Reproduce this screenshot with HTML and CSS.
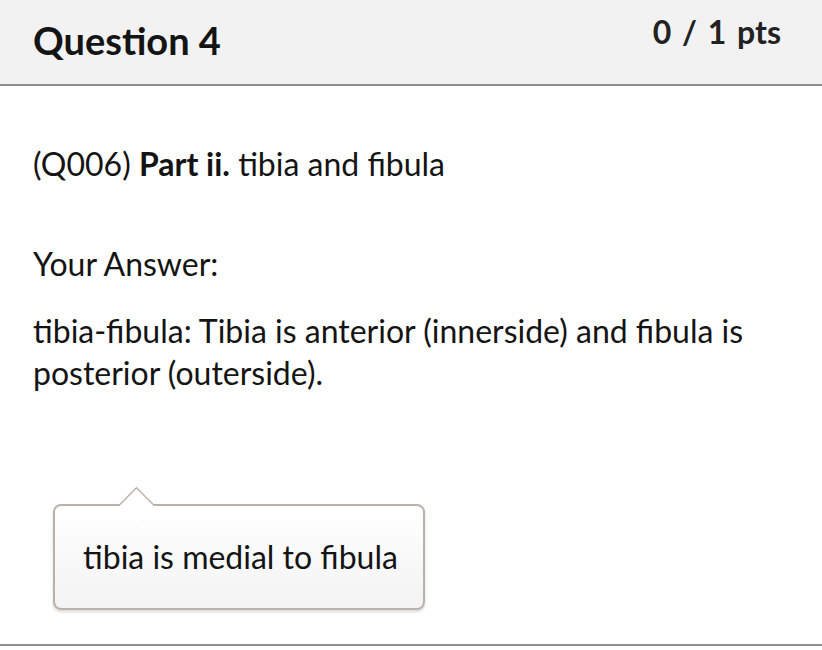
FILE: index.html
```html
<!DOCTYPE html>
<html lang="en">
<head>
    <meta charset="UTF-8" />
    <meta name="viewport" content="width=device-width, initial-scale=1" />
    <title>Question 4</title>
    <link rel="stylesheet" href="styles.css">
</head>
<body>
    <div class="question">
        <div class="question-header">
            <h2 class="question-title">Question 4</h2>
            <div class="question-points">0 / 1 pts</div>
        </div>
        <div class="question-body">
            <p class="question-text">(Q006) <strong>Part ii.</strong> tibia and fibula</p>
            <p class="answer-label">Your Answer:</p>
            <p class="answer-text">tibia-fibula: Tibia is anterior (innerside) and fibula is posterior (outerside).</p>
            <div class="comment">tibia is medial to fibula</div>
        </div>
        <div class="question-footer"></div>
    </div>
</body>
</html>
```

FILE: styles.css
```css
body {
    margin: 0;
    font-family: Lato, "Liberation Sans", sans-serif;
    color: #141414;
    background: #fff;
}

.question-header {
    display: flex;
    justify-content: space-between;
    align-items: flex-start;
    height: 84px;
    padding: 0 41px 0 33px;
    background-color: #f2f2f2;
    border-bottom: 2px solid #8e8e8e;
}

.question-title {
    margin: 21px 0 0;
    font-size: 38px;
    line-height: 1;
    font-weight: bold;
}

.question-points {
    margin-top: 16px;
    font-size: 32px;
    line-height: 1;
    font-weight: bold;
    word-spacing: 3px;
    color: #222;
}

.question-body {
    padding: 57px 40px 34px 33px;
    font-size: 32px;
    line-height: 42px;
}

.question-body p {
    margin: 0;
}

.question-text {
    margin-bottom: 58px !important;
}

.question-text strong {
    font-weight: bold;
}

.answer-label {
    margin-bottom: 25px !important;
}

.answer-text {
    max-width: 740px;
}

/* comment bubble */
.comment {
    position: relative;
    box-sizing: border-box;
    width: 372px;
    height: 106px;
    margin: 110px 0 0 20px;
    padding: 0 0 0 28px;
    display: flex;
    align-items: center;
    font-size: 32px;
    border: 2px solid #b8b2ab;
    border-radius: 8px;
    background: linear-gradient(#fff, #f3f3f3);
    box-shadow: 0 2px 3px rgba(0, 0, 0, 0.15);
}

.comment::before,
.comment::after {
    content: "";
    position: absolute;
    left: 69px;
    width: 25px;
    height: 25px;
    transform: rotate(45deg);
}

.comment::before {
    top: -14px;
    background: #b8b2ab;
}

.comment::after {
    top: -12px;
    background: #fff;
}

.question-footer {
    border-top: 2px solid #8e8e8e;
}
```
